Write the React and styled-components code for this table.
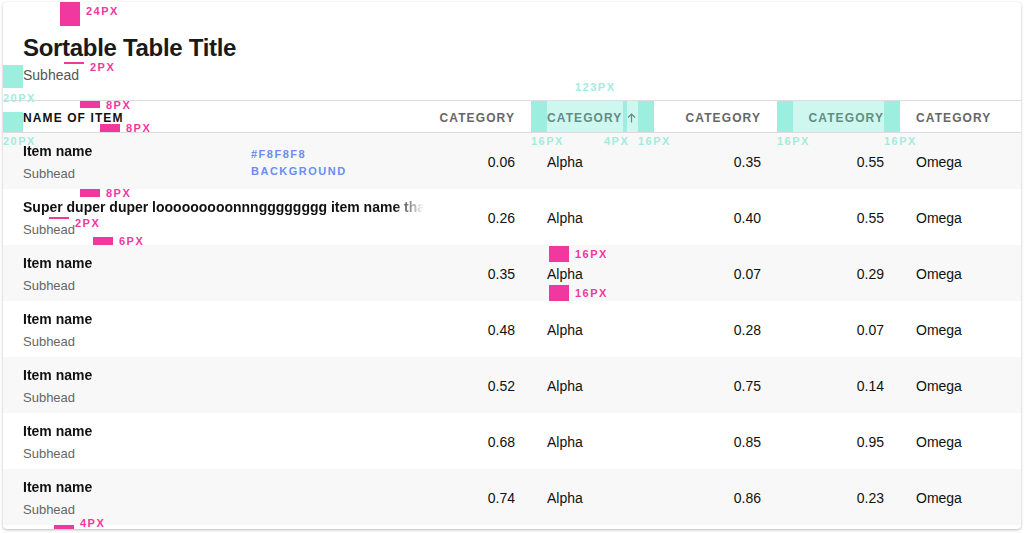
import React from "react";
import styled, { createGlobalStyle } from "styled-components";

const GlobalStyle = createGlobalStyle`
  body {
    margin: 0;
    background: #fff;
    font-family: "Liberation Sans", Arial, sans-serif;
    -webkit-font-smoothing: antialiased;
  }
`;

const PINK = "#f0389f";
const TEAL = "rgba(90, 227, 202, 0.6)";
const TEAL_LIGHT = "rgba(90, 227, 202, 0.3)";
const TEAL_TEXT = "#a3ecdd";
const BLUE = "#6a8ef2";

const Page = styled.div`
  position: relative;
  padding: 2px 4px 4px 3px;
`;

// the card that holds title + table
const Card = styled.div`
  width: 1018px;
  background: #fff;
  border-radius: 4px;
  box-shadow: 0 1px 3px rgba(0, 0, 0, 0.28);
  padding-bottom: 4px;
  overflow: hidden;
`;

const Head = styled.div`
  padding: 27px 20px 17px;
`;

const Title = styled.h1`
  margin: 0;
  font-size: 24px;
  line-height: 38px;
  font-weight: 700;
  letter-spacing: -0.3px;
  color: #1a1a1a;
`;

const Subhead = styled.div`
  font-size: 14px;
  line-height: 16px;
  color: #555;
`;

const Grid = styled.div`
  display: grid;
  grid-template-columns: 1fr 123px 123px 123px 123px 121px;
`;

const HeaderRow = styled(Grid)`
  border-top: 1px solid #dcdcdc;
  border-bottom: 1px solid #dcdcdc;
`;

const Th = styled.div`
  display: flex;
  align-items: center;
  justify-content: ${(p) => (p.$right ? "flex-end" : "flex-start")};
  padding: 9px 16px 6px ${(p) => (p.$first ? "20px" : "16px")};
  font-size: 12px;
  line-height: 16px;
  font-weight: 700;
  letter-spacing: 1.1px;
  text-transform: uppercase;
  color: ${(p) => (p.$first ? "#111" : "#666")};
  white-space: nowrap;
`;

const SortIcon = styled.span`
  display: inline-flex;
  justify-content: center;
  width: 11px;
  margin-left: 4px;
`;

const Row = styled(Grid)`
  height: 56px;
  background: ${(p) => (p.$shade ? "#f8f8f8" : "#fff")};
`;

const Td = styled.div`
  display: flex;
  align-items: center;
  justify-content: ${(p) => (p.$right ? "flex-end" : "flex-start")};
  padding: 2px 16px 0;
  font-size: 14px;
  color: #111;
`;

const NameCell = styled.div`
  display: flex;
  flex-direction: column;
  gap: 6px;
  padding: 9px 0 0 20px;
  min-width: 0;
`;

const ItemName = styled.div`
  font-size: 14px;
  line-height: 18px;
  font-weight: 700;
  color: #111;
  white-space: nowrap;
  overflow: hidden;
  margin-right: -16px;
  -webkit-mask-image: linear-gradient(to right, #000 calc(100% - 30px), transparent);
  mask-image: linear-gradient(to right, #000 calc(100% - 30px), transparent);
`;

const ItemSub = styled.div`
  font-size: 13px;
  line-height: 16px;
  color: #666;
`;

// redline marks laid over the design
const Mark = styled.div`
  position: absolute;
  left: ${(p) => p.$x}px;
  top: ${(p) => p.$y}px;
  width: ${(p) => p.$w}px;
  height: ${(p) => p.$h}px;
  background: ${(p) => p.$c};
  pointer-events: none;
`;

const Label = styled.span`
  position: absolute;
  left: ${(p) => p.$x}px;
  top: ${(p) => p.$y}px;
  font-size: 11px;
  line-height: 11px;
  font-weight: 700;
  letter-spacing: 1.5px;
  color: ${(p) => p.$c};
  white-space: nowrap;
`;

const rows = [
  ["Item name", "0.06", "0.35", "0.55"],
  ["Super duper duper looooooooonnngggggggg item name that is long", "0.26", "0.40", "0.55"],
  ["Item name", "0.35", "0.07", "0.29"],
  ["Item name", "0.48", "0.28", "0.07"],
  ["Item name", "0.52", "0.75", "0.14"],
  ["Item name", "0.68", "0.85", "0.95"],
  ["Item name", "0.74", "0.86", "0.23"],
];

const blocks = [
  [60, 2, 20, 24, PINK],
  [64, 62, 20, 2, PINK],
  [3, 65, 20, 23, TEAL],
  [80, 101, 20, 7, PINK],
  [3, 112, 20, 20, TEAL],
  [100, 124, 20, 8, PINK],
  [531, 101, 16, 31, TEAL],
  [547, 101, 76, 31, TEAL_LIGHT],
  [623, 101, 4, 31, TEAL],
  [627, 101, 11, 31, TEAL_LIGHT],
  [638, 101, 16, 31, TEAL],
  [777, 101, 16, 31, TEAL],
  [793, 101, 91, 31, TEAL_LIGHT],
  [884, 101, 16, 31, TEAL],
  [80, 189, 20, 8, PINK],
  [49, 217, 20, 2, PINK],
  [93, 237, 20, 8, PINK],
  [549, 246, 20, 16, PINK],
  [549, 285, 20, 16, PINK],
  [54, 525, 20, 4, PINK],
];

const labels = [
  [86, 5.6, "24PX", PINK],
  [90, 61.6, "2PX", PINK],
  [3, 92.6, "20PX", TEAL_TEXT],
  [106, 99.6, "8PX", PINK],
  [126, 122.6, "8PX", PINK],
  [3, 135.6, "20PX", TEAL_TEXT],
  [575, 81.6, "123PX", TEAL_TEXT],
  [531, 135.6, "16PX", TEAL_TEXT],
  [604, 135.6, "4PX", TEAL_TEXT],
  [638, 135.6, "16PX", TEAL_TEXT],
  [777, 135.6, "16PX", TEAL_TEXT],
  [884, 135.6, "16PX", TEAL_TEXT],
  [251, 148.6, "#F8F8F8", BLUE],
  [251, 165.6, "BACKGROUND", BLUE],
  [106, 187.6, "8PX", PINK],
  [75, 217.6, "2PX", PINK],
  [119, 235.6, "6PX", PINK],
  [575, 248.6, "16PX", PINK],
  [575, 287.6, "16PX", PINK],
  [80, 517.6, "4PX", PINK],
];

const ArrowUp = () => (
  <svg width="9" height="10" viewBox="0 0 9 10" fill="none" stroke="#666" strokeWidth="1.2">
    <path d="M4.5 9.5V1M1 4.5L4.5 1L8 4.5" />
  </svg>
);

export default function App() {
  return (
    <Page>
      <GlobalStyle />
      <Card>
        <Head>
          <Title>Sortable Table Title</Title>
          <Subhead>Subhead</Subhead>
        </Head>
        <HeaderRow>
          <Th $first>Name of item</Th>
          <Th $right>Category</Th>
          <Th>
            Category
            <SortIcon>
              <ArrowUp />
            </SortIcon>
          </Th>
          <Th $right>Category</Th>
          <Th $right>Category</Th>
          <Th>Category</Th>
        </HeaderRow>
        {rows.map((r, i) => (
          <Row key={i} $shade={i % 2 === 0}>
            <NameCell>
              <ItemName>{r[0]}</ItemName>
              <ItemSub>Subhead</ItemSub>
            </NameCell>
            <Td $right>{r[1]}</Td>
            <Td>Alpha</Td>
            <Td $right>{r[2]}</Td>
            <Td $right>{r[3]}</Td>
            <Td>Omega</Td>
          </Row>
        ))}
      </Card>
      {blocks.map(([x, y, w, h, c], i) => (
        <Mark key={"m" + i} $x={x} $y={y} $w={w} $h={h} $c={c} />
      ))}
      {labels.map(([x, y, t, c], i) => (
        <Label key={"l" + i} $x={x} $y={y} $c={c}>
          {t}
        </Label>
      ))}
    </Page>
  );
}
